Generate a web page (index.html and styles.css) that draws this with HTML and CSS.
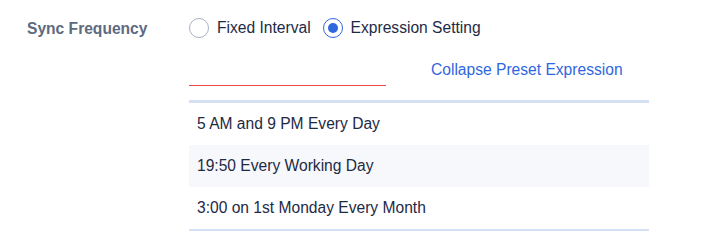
FILE: index.html
```html
<!DOCTYPE html>
<html>
<head>
<meta charset="utf-8">
<link rel="stylesheet" href="styles.css">
</head>
<body>
<div class="form-row">
  <div class="label">Sync Frequency</div>
  <div class="content">
    <div class="radios">
      <label class="radio"><span class="circle"></span><span class="rtext">Fixed Interval</span></label>
      <label class="radio checked"><span class="circle"><span class="dot"></span></span><span class="rtext">Expression Setting</span></label>
    </div>
    <div class="expr-row">
      <div class="expr-input"><div class="underline"></div></div>
      <a class="collapse">Collapse Preset Expression</a>
    </div>
    <ul class="preset-list">
      <li class="item">5 AM and 9 PM Every Day</li>
      <li class="item alt">19:50 Every Working Day</li>
      <li class="item">3:00 on 1st Monday Every Month</li>
    </ul>
  </div>
</div>
</body>
</html>
```
FILE: styles.css
```css
html, body {
  margin: 0;
  padding: 0;
  background: #ffffff;
}
body {
  font-family: "Liberation Sans", Arial, sans-serif;
  font-size: 15.6px;
  color: #1e2a45;
}
.form-row {
  display: flex;
  padding: 17px 0 0 27px;
}
.label {
  width: 162px;
  font-weight: bold;
  font-size: 15.6px;
  color: #5e6a80;
  line-height: 20px;
  padding-top: 2px;
}
.content {
  width: 460px;
}
.radios {
  display: flex;
  align-items: center;
  height: 20px;
  padding-top: 1px;
}
.radio {
  display: flex;
  align-items: center;
  margin-right: 12px;
}
.circle {
  box-sizing: border-box;
  width: 20px;
  height: 20px;
  border: 1px solid #a9b1c2;
  border-radius: 50%;
  display: flex;
  align-items: center;
  justify-content: center;
  margin-right: 8px;
}
.checked .circle {
  border-color: #2f67e0;
}
.dot {
  width: 10px;
  height: 10px;
  border-radius: 50%;
  background: #2f67e0;
}
.rtext {
  line-height: 20px;
  color: #1e2a45;
}
.expr-row {
  display: flex;
  align-items: flex-end;
  margin-top: 18px;
  height: 30px;
}
.expr-input {
  width: 197px;
  height: 30px;
  display: flex;
  flex-direction: column;
  justify-content: flex-end;
}
.underline {
  height: 1px;
  background-color: #ef4444;
}
.collapse {
  margin-left: 45px;
  color: #2f67e0;
  line-height: 20px;
  margin-bottom: 6px;
  cursor: pointer;
}
.preset-list {
  list-style: none;
  margin: 14px 0 0 0;
  padding: 0;
  border-top: 3px solid #d6e0f5;
  border-bottom: 2px solid #d6e0f5;
}
.item {
  height: 42px;
  line-height: 42px;
  padding-left: 8px;
}
.item.alt {
  background: #f7f8fc;
}
```
